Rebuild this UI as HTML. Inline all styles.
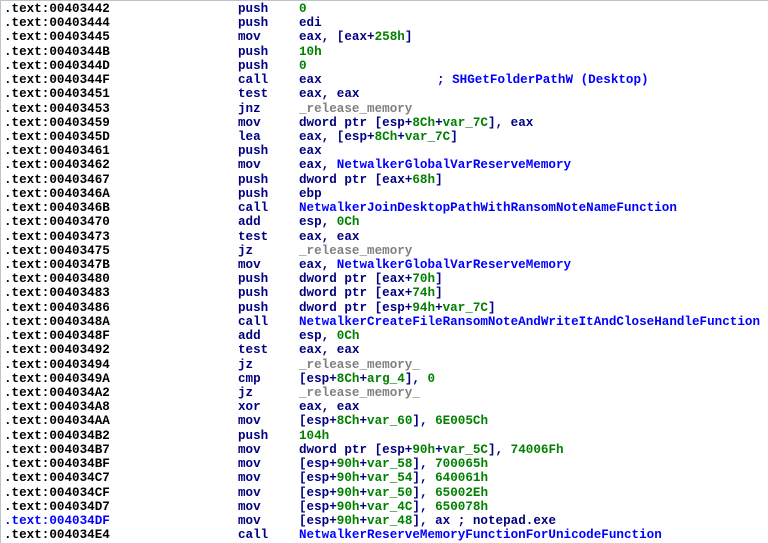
<!DOCTYPE html>
<html><head><meta charset="utf-8"><style>
html,body{margin:0;padding:0;background:#fff;}
body{width:768px;height:543px;overflow:hidden;position:relative;font-family:"Liberation Mono",monospace;font-weight:bold;font-size:12.6px;}
.frame{position:absolute;left:0;top:0;width:767px;height:542px;border-left:1px solid #b8c4d0;border-top:1px solid #b8c4d0;}
#w{position:absolute;left:0;top:1px;width:768px;height:542px;}
.l{position:absolute;left:0;height:14px;line-height:14px;white-space:pre;width:768px;}
.a{position:absolute;left:4px;color:#000;}
.m{position:absolute;left:238px;color:#000080;}
.o{position:absolute;left:299px;color:#000080;}
.c{position:absolute;left:437px;color:#0000ff;}
.g{color:#008000}.b{color:#0000ff}.x{color:#808080}
</style></head><body><div class="frame"></div>
<div id="w">
<div class="l" style="top:1px"><span class="a">.text:00403442</span><span class="m">push</span><span class="o"><span class="g">0</span></span></div>
<div class="l" style="top:15.2px"><span class="a">.text:00403444</span><span class="m">push</span><span class="o">edi</span></div>
<div class="l" style="top:29.4px"><span class="a">.text:00403445</span><span class="m">mov</span><span class="o">eax, [eax+<span class="g">258h</span>]</span></div>
<div class="l" style="top:43.7px"><span class="a">.text:0040344B</span><span class="m">push</span><span class="o"><span class="g">10h</span></span></div>
<div class="l" style="top:57.9px"><span class="a">.text:0040344D</span><span class="m">push</span><span class="o"><span class="g">0</span></span></div>
<div class="l" style="top:72.1px"><span class="a">.text:0040344F</span><span class="m">call</span><span class="o">eax</span><span class="c">; SHGetFolderPathW (Desktop)</span></div>
<div class="l" style="top:86.3px"><span class="a">.text:00403451</span><span class="m">test</span><span class="o">eax, eax</span></div>
<div class="l" style="top:100.5px"><span class="a">.text:00403453</span><span class="m">jnz</span><span class="o"><span class="x">_release_memory</span></span></div>
<div class="l" style="top:114.8px"><span class="a">.text:00403459</span><span class="m">mov</span><span class="o">dword ptr [esp+<span class="g">8Ch</span>+<span class="g">var_7C</span>], eax</span></div>
<div class="l" style="top:129px"><span class="a">.text:0040345D</span><span class="m">lea</span><span class="o">eax, [esp+<span class="g">8Ch</span>+<span class="g">var_7C</span>]</span></div>
<div class="l" style="top:143.2px"><span class="a">.text:00403461</span><span class="m">push</span><span class="o">eax</span></div>
<div class="l" style="top:157.4px"><span class="a">.text:00403462</span><span class="m">mov</span><span class="o">eax, <span class="b">NetwalkerGlobalVarReserveMemory</span></span></div>
<div class="l" style="top:171.6px"><span class="a">.text:00403467</span><span class="m">push</span><span class="o">dword ptr [eax+<span class="g">68h</span>]</span></div>
<div class="l" style="top:185.9px"><span class="a">.text:0040346A</span><span class="m">push</span><span class="o">ebp</span></div>
<div class="l" style="top:200.1px"><span class="a">.text:0040346B</span><span class="m">call</span><span class="o"><span class="b">NetwalkerJoinDesktopPathWithRansomNoteNameFunction</span></span></div>
<div class="l" style="top:214.3px"><span class="a">.text:00403470</span><span class="m">add</span><span class="o">esp, <span class="g">0Ch</span></span></div>
<div class="l" style="top:228.5px"><span class="a">.text:00403473</span><span class="m">test</span><span class="o">eax, eax</span></div>
<div class="l" style="top:242.7px"><span class="a">.text:00403475</span><span class="m">jz</span><span class="o"><span class="x">_release_memory</span></span></div>
<div class="l" style="top:257px"><span class="a">.text:0040347B</span><span class="m">mov</span><span class="o">eax, <span class="b">NetwalkerGlobalVarReserveMemory</span></span></div>
<div class="l" style="top:271.2px"><span class="a">.text:00403480</span><span class="m">push</span><span class="o">dword ptr [eax+<span class="g">70h</span>]</span></div>
<div class="l" style="top:285.4px"><span class="a">.text:00403483</span><span class="m">push</span><span class="o">dword ptr [eax+<span class="g">74h</span>]</span></div>
<div class="l" style="top:299.6px"><span class="a">.text:00403486</span><span class="m">push</span><span class="o">dword ptr [esp+<span class="g">94h</span>+<span class="g">var_7C</span>]</span></div>
<div class="l" style="top:313.8px"><span class="a">.text:0040348A</span><span class="m">call</span><span class="o"><span class="b">NetwalkerCreateFileRansomNoteAndWriteItAndCloseHandleFunction</span></span></div>
<div class="l" style="top:328.1px"><span class="a">.text:0040348F</span><span class="m">add</span><span class="o">esp, <span class="g">0Ch</span></span></div>
<div class="l" style="top:342.3px"><span class="a">.text:00403492</span><span class="m">test</span><span class="o">eax, eax</span></div>
<div class="l" style="top:356.5px"><span class="a">.text:00403494</span><span class="m">jz</span><span class="o"><span class="x">_release_memory_</span></span></div>
<div class="l" style="top:370.7px"><span class="a">.text:0040349A</span><span class="m">cmp</span><span class="o">[esp+<span class="g">8Ch</span>+<span class="g">arg_4</span>], <span class="g">0</span></span></div>
<div class="l" style="top:384.9px"><span class="a">.text:004034A2</span><span class="m">jz</span><span class="o"><span class="x">_release_memory_</span></span></div>
<div class="l" style="top:399.2px"><span class="a">.text:004034A8</span><span class="m">xor</span><span class="o">eax, eax</span></div>
<div class="l" style="top:413.4px"><span class="a">.text:004034AA</span><span class="m">mov</span><span class="o">[esp+<span class="g">8Ch</span>+<span class="g">var_60</span>], <span class="g">6E005Ch</span></span></div>
<div class="l" style="top:427.6px"><span class="a">.text:004034B2</span><span class="m">push</span><span class="o"><span class="g">104h</span></span></div>
<div class="l" style="top:441.8px"><span class="a">.text:004034B7</span><span class="m">mov</span><span class="o">dword ptr [esp+<span class="g">90h</span>+<span class="g">var_5C</span>], <span class="g">74006Fh</span></span></div>
<div class="l" style="top:456px"><span class="a">.text:004034BF</span><span class="m">mov</span><span class="o">[esp+<span class="g">90h</span>+<span class="g">var_58</span>], <span class="g">700065h</span></span></div>
<div class="l" style="top:470.3px"><span class="a">.text:004034C7</span><span class="m">mov</span><span class="o">[esp+<span class="g">90h</span>+<span class="g">var_54</span>], <span class="g">640061h</span></span></div>
<div class="l" style="top:484.5px"><span class="a">.text:004034CF</span><span class="m">mov</span><span class="o">[esp+<span class="g">90h</span>+<span class="g">var_50</span>], <span class="g">65002Eh</span></span></div>
<div class="l" style="top:498.7px"><span class="a">.text:004034D7</span><span class="m">mov</span><span class="o">[esp+<span class="g">90h</span>+<span class="g">var_4C</span>], <span class="g">650078h</span></span></div>
<div class="l" style="top:512.9px"><span class="a" style="color:#0000ff">.text:004034DF</span><span class="m">mov</span><span class="o">[esp+<span class="g">90h</span>+<span class="g">var_48</span>], ax ; notepad.exe</span></div>
<div class="l" style="top:527.1px"><span class="a">.text:004034E4</span><span class="m">call</span><span class="o"><span class="b">NetwalkerReserveMemoryFunctionForUnicodeFunction</span></span></div>
</div>
</body></html>
